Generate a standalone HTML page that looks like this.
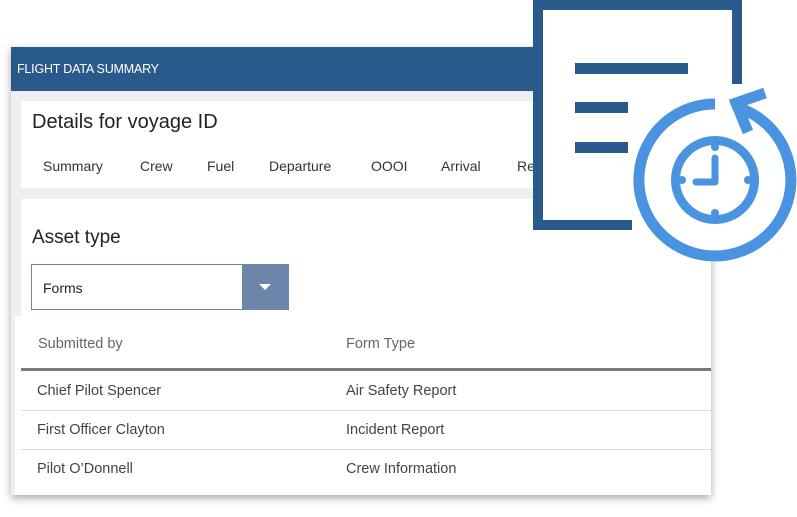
<!DOCTYPE html>
<html><head><meta charset="utf-8"><style>
*{margin:0;padding:0;box-sizing:border-box}
body{width:797px;height:517px;background:#fff;position:relative;overflow:hidden;font-family:"Liberation Sans",sans-serif}
.card{position:absolute;left:11px;top:47px;width:700px;height:448px;background:#efefef;box-shadow:0 3px 8px rgba(0,0,0,.35)}
.hdr{position:absolute;left:0;top:0;width:100%;height:44px;background:#2a5a8c;color:#fff;font-size:12.5px;line-height:44px;padding-left:6px;letter-spacing:-.2px}
.p1{position:absolute;left:10px;top:54px;width:690px;height:87px;background:#fff}
.p1 h1{position:absolute;left:11px;top:10px;font-size:20px;font-weight:normal;color:#222}
.tabs span{position:absolute;top:57px;font-size:14px;color:#333}
.p2{position:absolute;left:10px;top:152px;width:690px;height:117px;background:#fff}
.p2 h2{position:absolute;left:11px;top:28px;font-size:19px;font-weight:normal;color:#222}
.sel{position:absolute;left:10px;top:65px;width:258px;height:46px;border:1px solid #6b86a9;background:#fff}
.sel span{position:absolute;left:11px;top:15px;font-size:14px;color:#222}
.btn{position:absolute;right:0;top:0;width:46px;height:44px;background:#6b86a9}
.btn:after{content:"";position:absolute;left:17px;top:19px;border-left:6px solid transparent;border-right:6px solid transparent;border-top:6px solid #fff}
.tbl{position:absolute;left:4px;top:269px;width:696px;height:179px;background:#fff}
.r{position:absolute;left:6px;width:690px;font-size:14.5px;color:#444}
.r span{position:absolute;top:0}
</style></head><body>
<div class="card">
<div class="hdr">FLIGHT DATA SUMMARY</div>
<div class="p1"><h1>Details for voyage ID</h1>
<div class="tabs"><span style="left:22px">Summary</span><span style="left:119px">Crew</span><span style="left:186px">Fuel</span><span style="left:248px">Departure</span><span style="left:350px">OOOI</span><span style="left:420px">Arrival</span><span style="left:496px">Re</span></div></div>
<div class="p2"><h2>Asset type</h2><div class="sel"><span>Forms</span><div class="btn"></div></div></div>
<div class="tbl">
<div class="r" style="top:20px;color:#666"><span style="left:17px">Submitted by</span><span style="left:325px">Form Type</span></div>
<div style="position:absolute;left:6px;top:52px;width:690px;height:3px;background:#7a7a7a"></div>
<div class="r" style="top:67px"><span style="left:16px">Chief Pilot Spencer</span><span style="left:325px">Air Safety Report</span></div>
<div style="position:absolute;left:6px;top:94px;width:690px;height:1px;background:#ddd"></div>
<div class="r" style="top:106px"><span style="left:16px">First Officer Clayton</span><span style="left:325px">Incident Report</span></div>
<div style="position:absolute;left:6px;top:133px;width:690px;height:1px;background:#ddd"></div>
<div class="r" style="top:145px"><span style="left:16px">Pilot O’Donnell</span><span style="left:325px">Crew Information</span></div>
</div>
</div>
<svg style="position:absolute;left:0;top:0" width="797" height="517">
<rect x="538" y="-5" width="199" height="230" fill="#fff"/>
<path d="M632 225 H538 V5 H737 V84" fill="none" stroke="#2a5a8c" stroke-width="10"/>
<rect x="575" y="63" width="113" height="11" fill="#2a5a8c"/>
<rect x="575" y="102" width="53" height="11" fill="#2a5a8c"/>
<rect x="575" y="142" width="53" height="11" fill="#2a5a8c"/>
<circle cx="715" cy="180" r="82" fill="#fff"/>
<path d="M715 104 A76 76 0 1 0 742 109" fill="none" stroke="#4a93e0" stroke-width="11"/>
<path d="M765 93 L736 103 L748 132" fill="none" stroke="#4a93e0" stroke-width="11"/>
<circle cx="715" cy="180" r="39.5" fill="none" stroke="#4a93e0" stroke-width="9"/>
<circle cx="715" cy="147" r="4" fill="#4a93e0"/><circle cx="715" cy="213" r="4" fill="#4a93e0"/>
<circle cx="682" cy="180" r="4" fill="#4a93e0"/><circle cx="748" cy="180" r="4" fill="#4a93e0"/>
<path d="M715 158 V182 H696" fill="none" stroke="#4a93e0" stroke-width="7" stroke-linecap="round" stroke-linejoin="round"/>
</svg>
</body></html>
